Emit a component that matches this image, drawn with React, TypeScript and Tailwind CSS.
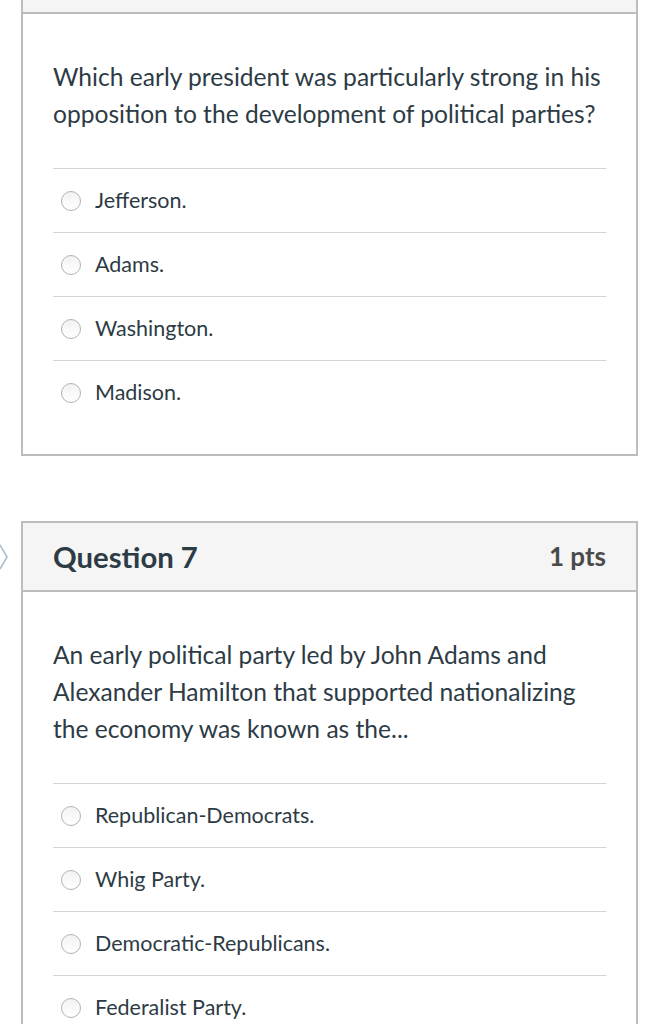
const QUESTIONS = [
  {
    id: 6,
    pts: 1,
    text: 'Which early president was particularly strong in his opposition to the development of political parties?',
    answers: ['Jefferson.', 'Adams.', 'Washington.', 'Madison.'],
  },
  {
    id: 7,
    pts: 1,
    text: 'An early political party led by John Adams and Alexander Hamilton that supported nationalizing the economy was known as the...',
    answers: ['Republican-Democrats.', 'Whig Party.', 'Democratic-Republicans.', 'Federalist Party.'],
  },
];

function QuestionCard({ q, first }: { q: (typeof QUESTIONS)[number]; first?: boolean }) {
  return (
    <div className={`relative ${first ? '' : 'mt-[65px]'}`}>
      {!first && (
        <svg
          className="absolute -left-[22px] top-[20px]"
          width="10"
          height="32"
          viewBox="0 0 10 32"
          fill="none"
        >
          <path d="M1 4 L8 16 L1 28" stroke="#a9bccd" strokeWidth="1.5" strokeLinejoin="round" />
        </svg>
      )}
      <div className={`border-2 border-[#bdbdbd] bg-white ${first ? 'border-t-0' : ''}`}>
        {/* Header — the previous card is scrolled so only its bottom edge shows */}
        {first ? (
          <div className="h-[14px] border-b-2 border-[#bdbdbd] bg-[#f5f5f5]" />
        ) : (
          <div className="flex h-[69px] items-center justify-between border-b-2 border-[#bdbdbd] bg-[#f5f5f5] px-[30px]">
            <span className="text-[29.3px] font-bold text-[#2d3b45]">Question {q.id}</span>
            <span className="text-[26px] font-bold text-[#4a4a4a]">{q.pts} pts</span>
          </div>
        )}

        {/* Body */}
        <div className="px-[30px] pb-[30px] pt-[44px]">
          <p className="text-[24.6px] leading-[37px] text-[#2d3b45]">{q.text}</p>
          <div className="mt-[36px]">
            {q.answers.map((a) => (
              <div key={a} className="flex h-[64px] items-center border-t border-[#d4d4d4]">
                <span className="ml-[8px] h-[20px] w-[20px] shrink-0 rounded-full border border-[#b3b3b3] bg-gradient-to-b from-[#f2f2f2] to-white" />
                <span className="ml-[14px] text-[21.5px] text-[#2d3b45]">{a}</span>
              </div>
            ))}
          </div>
        </div>
      </div>
    </div>
  );
}

export default function App() {
  return (
    <div className="min-h-[1024px] overflow-hidden bg-white pl-[21px] pr-[19px] font-['Lato',sans-serif]">
      {QUESTIONS.map((q, i) => (
        <QuestionCard key={q.id} q={q} first={i === 0} />
      ))}
    </div>
  );
}
